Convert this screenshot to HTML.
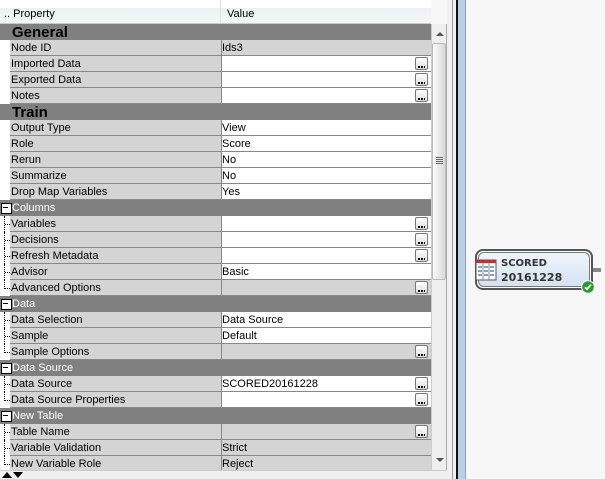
<!DOCTYPE html><html><head><style>
*{margin:0;padding:0;box-sizing:border-box}
body{width:605px;height:479px;overflow:hidden;background:#f7f7f7;font-family:"Liberation Sans",sans-serif;font-size:11px;color:#000;position:relative}
.abs{position:absolute}
#grid{left:0;top:24px;width:431px;height:446px;overflow:hidden;background:#fff}
.r{position:absolute;left:0;width:431px;height:16px}
.p{position:absolute;left:10px;width:212px;height:16px;background:#d4d4d4;border-right:1px solid #888;border-bottom:1px solid #888;padding-left:1px;padding-top:2px;line-height:13px;white-space:nowrap}
.v{position:absolute;left:222px;width:209px;height:16px;border-bottom:1px solid #888;line-height:13px;padding-top:2px}
.w{background:#fff}.g{background:#d4d4d4}
.h{position:absolute;left:0;width:431px;height:16px;background:#808080;color:#000;font-weight:bold;font-size:15px;line-height:18px;padding-left:12px}
.gh{position:absolute;left:0;width:431px;height:16px;background:#808080;color:#fff;line-height:13px;padding-top:2px;padding-left:12px}
.gh:before{content:"";position:absolute;left:1px;top:3px;width:9px;height:9px;border:1px solid #000;background:#fff}
.gh:after{content:"";position:absolute;left:3px;top:7px;width:5px;height:1px;background:#000}
.b{position:absolute;right:3px;top:1px;width:13px;height:13px;border:1px solid #777;border-radius:2px;background:linear-gradient(#fff,#ddd)}
.b:after{content:"";position:absolute;left:2px;top:8px;width:7px;height:2px;background:repeating-linear-gradient(90deg,#000 0 2px,transparent 2px 3px)}
.t{position:absolute;left:4px;top:0;width:1px;height:16px;border-left:1px dotted #000}
.t:after{content:"";position:absolute;left:0;top:8px;width:5px;border-top:1px dotted #000}
.tl{height:9px}
</style></head><body>
<div class="abs" style="left:0;top:0;width:431px;height:24px;background:linear-gradient(#fff 0,#fff 8px,#eef0f3 8px,#f5f6f8 22px);border-bottom:1px solid #ccc"></div>
<div class="abs" style="left:220px;top:0;width:1px;height:23px;background:#e0e0e0"></div>
<div class="abs" style="left:4px;top:8px">.. Property</div>
<div class="abs" style="left:227px;top:8px">Value</div>
<div class="abs" id="grid">
<div class="h" style="top:0">General</div>
<div class="r" style="top:16px"><div class="p">Node ID</div><div class="v g">Ids3</div></div>
<div class="r" style="top:32px"><div class="p">Imported Data</div><div class="v w"><i class="b"></i></div></div>
<div class="r" style="top:48px"><div class="p">Exported Data</div><div class="v w"><i class="b"></i></div></div>
<div class="r" style="top:64px"><div class="p">Notes</div><div class="v w"><i class="b"></i></div></div>
<div class="h" style="top:80px">Train</div>
<div class="r" style="top:96px"><div class="p">Output Type</div><div class="v w">View</div></div>
<div class="r" style="top:112px"><div class="p">Role</div><div class="v w">Score</div></div>
<div class="r" style="top:128px"><div class="p">Rerun</div><div class="v w">No</div></div>
<div class="r" style="top:144px"><div class="p">Summarize</div><div class="v w">No</div></div>
<div class="r" style="top:160px"><div class="p">Drop Map Variables</div><div class="v w">Yes</div></div>
<div class="gh" style="top:176px">Columns</div>
<div class="r" style="top:192px"><i class="t"></i><div class="p">Variables</div><div class="v w"><i class="b"></i></div></div>
<div class="r" style="top:208px"><i class="t"></i><div class="p">Decisions</div><div class="v w"><i class="b"></i></div></div>
<div class="r" style="top:224px"><i class="t"></i><div class="p">Refresh Metadata</div><div class="v w"><i class="b"></i></div></div>
<div class="r" style="top:240px"><i class="t"></i><div class="p">Advisor</div><div class="v w">Basic</div></div>
<div class="r" style="top:256px"><i class="t tl"></i><div class="p">Advanced Options</div><div class="v g"><i class="b"></i></div></div>
<div class="gh" style="top:272px">Data</div>
<div class="r" style="top:288px"><i class="t"></i><div class="p">Data Selection</div><div class="v w">Data Source</div></div>
<div class="r" style="top:304px"><i class="t"></i><div class="p">Sample</div><div class="v w">Default</div></div>
<div class="r" style="top:320px"><i class="t tl"></i><div class="p">Sample Options</div><div class="v g"><i class="b"></i></div></div>
<div class="gh" style="top:336px">Data Source</div>
<div class="r" style="top:352px"><i class="t"></i><div class="p">Data Source</div><div class="v w">SCORED20161228<i class="b"></i></div></div>
<div class="r" style="top:368px"><i class="t tl"></i><div class="p">Data Source Properties</div><div class="v w"><i class="b"></i></div></div>
<div class="gh" style="top:384px">New Table</div>
<div class="r" style="top:400px"><i class="t"></i><div class="p">Table Name</div><div class="v g"><i class="b"></i></div></div>
<div class="r" style="top:416px"><i class="t"></i><div class="p">Variable Validation</div><div class="v g">Strict</div></div>
<div class="r" style="top:432px"><i class="t tl"></i><div class="p">New Variable Role</div><div class="v g">Reject</div></div>
</div>
<div class="abs" style="left:431px;top:24px;width:16px;height:446px;background:#efefef;border-left:1px solid #ccc;border-right:1px solid #aaa"></div>
<div class="abs" style="left:436px;top:32px;width:0;height:0;border-left:4px solid transparent;border-right:4px solid transparent;border-bottom:4px solid #555"></div>
<div class="abs" style="left:432px;top:43px;width:14px;height:237px;background:linear-gradient(90deg,#fafafa,#d8d8d8);border:1px solid #bbb;border-radius:2px"></div>
<div class="abs" style="left:436px;top:157px;width:7px;height:7px;background:repeating-linear-gradient(#666 0 1px,transparent 1px 2px)"></div>
<div class="abs" style="left:436px;top:458px;width:0;height:0;border-left:4px solid transparent;border-right:4px solid transparent;border-top:4px solid #555"></div>
<div class="abs" style="left:0;top:470px;width:450px;height:9px;background:#f0f0f0;border-top:1px solid #ccc"></div>
<div class="abs" style="left:2px;top:472px;width:0;height:0;border-left:5px solid transparent;border-right:5px solid transparent;border-bottom:6px solid #000"></div>
<div class="abs" style="left:13px;top:472px;width:0;height:0;border-left:5px solid transparent;border-right:5px solid transparent;border-top:6px solid #000"></div>
<div class="abs" style="left:447px;top:0;width:9px;height:479px;background:#f0f0f0"></div>
<div class="abs" style="left:452px;top:0;width:1px;height:479px;background:#999"></div>
<div class="abs" style="left:456px;top:0;width:2px;height:479px;background:#111"></div>
<div class="abs" style="left:458px;top:0;width:8px;height:479px;background:#b8d0e8;border-right:1px solid #8aa"></div>
<div class="abs" style="left:475px;top:249px;width:118px;height:41px;border:2px solid #555;border-radius:8px;background:#fff"></div>
<div class="abs" style="left:478px;top:252px;width:112px;height:35px;border:1px solid #777;border-radius:6px;background:linear-gradient(#f0f5fb,#d4e2f2)"></div>
<div class="abs" style="left:593px;top:268px;width:8px;height:4px;background:#888"></div>
<svg class="abs" style="left:475px;top:259px" width="22" height="22" viewBox="0 0 22 22"><rect x="1" y="1" width="20" height="20" fill="#fff" stroke="#555"/><rect x="1" y="1" width="20" height="3" fill="#b33"/><g stroke="#36c" stroke-width="1.3"><path d="M3 8h4M9 8h4M15 8h4M3 12h4M9 12h4M15 12h4M3 16h4M9 16h4M15 16h4"/></g><path d="M8 4v17M14 4v17" stroke="#888"/></svg>
<div class="abs" style="left:501px;top:258px;font-weight:bold;font-size:10px;color:#333;font-family:'DejaVu Sans',sans-serif">SCORED</div>
<div class="abs" style="left:501px;top:271px;font-weight:bold;font-size:11px;color:#333;font-family:'DejaVu Sans',sans-serif">20161228</div>
<svg class="abs" style="left:581px;top:280px" width="14" height="14" viewBox="0 0 14 14"><circle cx="7" cy="7" r="6.3" fill="#2a9a2a" stroke="#fff" stroke-width="1"/><path d="M4 7.2l2 2 4-4.5" fill="none" stroke="#fff" stroke-width="1.8"/></svg>
</body></html>
